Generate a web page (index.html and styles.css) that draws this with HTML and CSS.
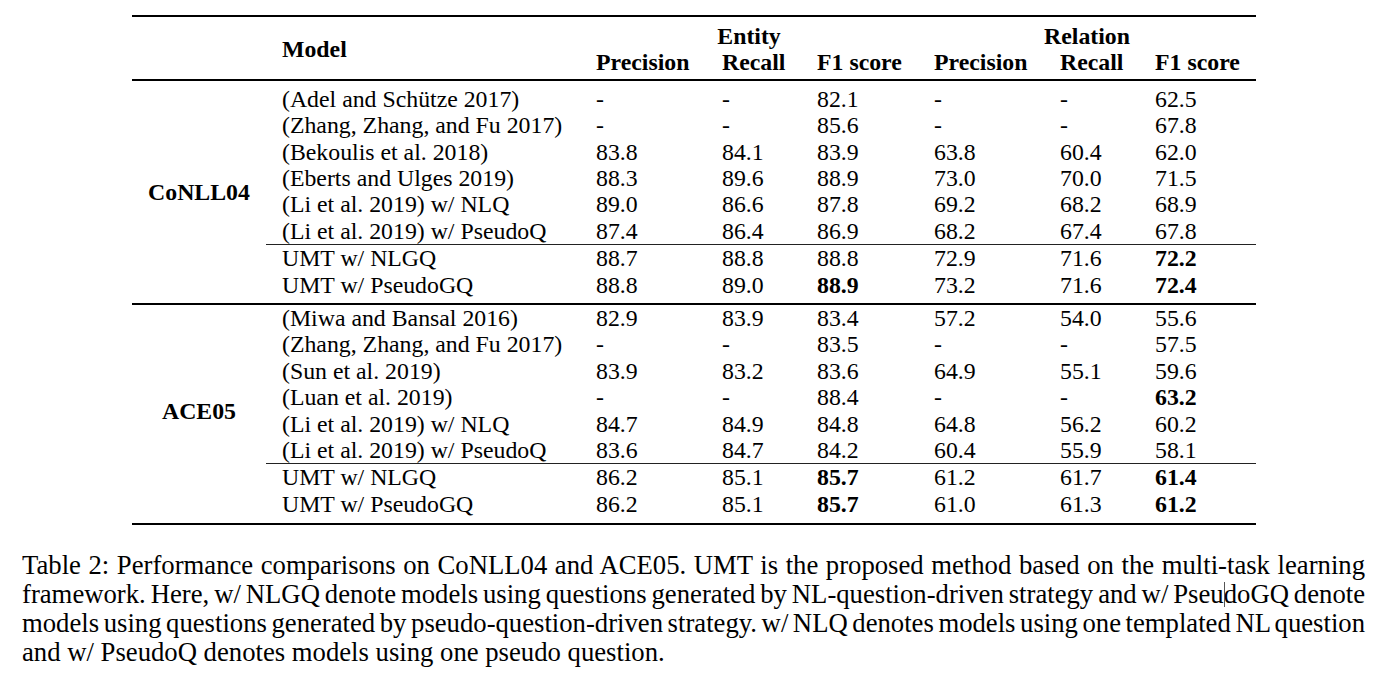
FILE: index.html
```html
<!DOCTYPE html>
<html lang="en">
<head>
<meta charset="utf-8">
<title>Table 2</title>
<link rel="stylesheet" href="styles.css">
</head>
<body>
<div class="page">
  <table class="results">
    <colgroup>
      <col class="c-data">
      <col class="c-model">
      <col class="c-prec">
      <col class="c-rec">
      <col class="c-f1">
      <col class="c-prec">
      <col class="c-rec">
      <col class="c-f1">
    </colgroup>
    <thead>
      <tr class="h1">
        <th class="span2" rowspan="2"></th>
        <th class="span2 model" rowspan="2">Model</th>
        <th class="group" colspan="3">Entity</th>
        <th class="group" colspan="3">Relation</th>
      </tr>
      <tr class="h2">
        <th>Precision</th><th>Recall</th><th>F1 score</th>
        <th>Precision</th><th>Recall</th><th>F1 score</th>
      </tr>
    </thead>
    <tbody>
      <tr class="first-a">
        <td class="dataset" rowspan="8">CoNLL04</td>
        <td>(Adel and Schütze 2017)</td><td>-</td><td>-</td><td>82.1</td><td>-</td><td>-</td><td>62.5</td>
      </tr>
      <tr><td>(Zhang, Zhang, and Fu 2017)</td><td>-</td><td>-</td><td>85.6</td><td>-</td><td>-</td><td>67.8</td></tr>
      <tr><td>(Bekoulis et al. 2018)</td><td>83.8</td><td>84.1</td><td>83.9</td><td>63.8</td><td>60.4</td><td>62.0</td></tr>
      <tr><td>(Eberts and Ulges 2019)</td><td>88.3</td><td>89.6</td><td>88.9</td><td>73.0</td><td>70.0</td><td>71.5</td></tr>
      <tr><td>(Li et al. 2019) w/ NLQ</td><td>89.0</td><td>86.6</td><td>87.8</td><td>69.2</td><td>68.2</td><td>68.9</td></tr>
      <tr><td>(Li et al. 2019) w/ PseudoQ</td><td>87.4</td><td>86.4</td><td>86.9</td><td>68.2</td><td>67.4</td><td>67.8</td></tr>
      <tr class="ours"><td>UMT w/ NLGQ</td><td>88.7</td><td>88.8</td><td>88.8</td><td>72.9</td><td>71.6</td><td><b>72.2</b></td></tr>
      <tr class="last-a"><td>UMT w/ PseudoGQ</td><td>88.8</td><td>89.0</td><td><b>88.9</b></td><td>73.2</td><td>71.6</td><td><b>72.4</b></td></tr>

      <tr class="first-b">
        <td class="dataset" rowspan="8">ACE05</td>
        <td>(Miwa and Bansal 2016)</td><td>82.9</td><td>83.9</td><td>83.4</td><td>57.2</td><td>54.0</td><td>55.6</td>
      </tr>
      <tr><td>(Zhang, Zhang, and Fu 2017)</td><td>-</td><td>-</td><td>83.5</td><td>-</td><td>-</td><td>57.5</td></tr>
      <tr><td>(Sun et al. 2019)</td><td>83.9</td><td>83.2</td><td>83.6</td><td>64.9</td><td>55.1</td><td>59.6</td></tr>
      <tr><td>(Luan et al. 2019)</td><td>-</td><td>-</td><td>88.4</td><td>-</td><td>-</td><td><b>63.2</b></td></tr>
      <tr><td>(Li et al. 2019) w/ NLQ</td><td>84.7</td><td>84.9</td><td>84.8</td><td>64.8</td><td>56.2</td><td>60.2</td></tr>
      <tr><td>(Li et al. 2019) w/ PseudoQ</td><td>83.6</td><td>84.7</td><td>84.2</td><td>60.4</td><td>55.9</td><td>58.1</td></tr>
      <tr class="ours"><td>UMT w/ NLGQ</td><td>86.2</td><td>85.1</td><td><b>85.7</b></td><td>61.2</td><td>61.7</td><td><b>61.4</b></td></tr>
      <tr class="last-b"><td>UMT w/ PseudoGQ</td><td>86.2</td><td>85.1</td><td><b>85.7</b></td><td>61.0</td><td>61.3</td><td><b>61.2</b></td></tr>
    </tbody>
  </table>

  <div class="caption">
    <div class="line">Table 2: Performance comparisons on CoNLL04 and ACE05. UMT is the proposed method based on the multi-task learning</div>
    <div class="line tight">framework. Here, w/ NLGQ denote models using questions generated by NL-question-driven strategy and w/ Pseu<span class="caret"></span>doGQ denote</div>
    <div class="line tight">models using questions generated by pseudo-question-driven strategy. w/ NLQ denotes models using one templated NL question</div>
    <div class="line last">and w/ PseudoQ denotes models using one pseudo question.</div>
  </div>
</div>
</body>
</html>
```

FILE: styles.css
```css
html, body {
  margin: 0;
  padding: 0;
  background: #ffffff;
  color: #000000;
}

.page {
  padding-top: 15px;
  font-family: "Liberation Serif", "Times New Roman", serif;
}

/* ---------- table ---------- */
.results {
  margin-left: 132px;
  width: 1124px;
  table-layout: fixed;
  border-collapse: separate;
  border-spacing: 0;
  border-top: 2px solid #000;
  border-bottom: 2px solid #000;
  font-size: 23.8px;
  line-height: 26.4px;
}

.c-data { width: 134px; }
.c-model { width: 314px; }
.c-prec { width: 126px; }
.c-rec { width: 95px; }
.c-f1 { width: 117px; }

.results th,
.results td {
  padding: 0 16px;
  text-align: left;
  vertical-align: middle;
  white-space: nowrap;
  height: 26.4px;
  box-sizing: content-box;
}

.results th {
  font-weight: bold;
}

.results b {
  font-weight: bold;
}

/* header rows */
.results .h1 th {
  padding-top: 5.6px;
}

.results .group {
  text-align: center;
}

.results th.span2 {
  padding-top: 5.6px;
  padding-bottom: 3.6px;
  border-bottom: 2px solid #000;
}

.results .h2 th {
  padding-bottom: 3.6px;
  border-bottom: 2px solid #000;
}

/* body rows */
.results .dataset {
  text-align: center;
  font-weight: bold;
  padding-left: 8px;
  padding-right: 8px;
}

.results .first-a td {
  padding-top: 4.8px;
}

.results .first-a td.dataset {
  padding-top: 4.8px;
  padding-bottom: 5px;
}

.results .ours td {
  border-top: 1px solid #222;
}

.results .last-a td {
  padding-bottom: 5px;
}

.results .first-b td {
  border-top: 2px solid #000;
}

.results .first-b td.dataset {
  padding-bottom: 6px;
}

.results .last-b td {
  padding-bottom: 6px;
}

/* ---------- caption ---------- */
.caption {
  margin: 25.5px 0 0 22px;
  width: 1343px;
  font-size: 26.7px;
  line-height: 29px;
}

.caption .line {
  text-align: justify;
  text-align-last: justify;
}

.caption .line.tight {
  word-spacing: -3px;
}

.caption .line.last {
  text-align: left;
  text-align-last: left;
}

.caret {
  position: relative;
  display: inline-block;
  width: 0;
  height: 0;
}

.caret::after {
  content: "";
  position: absolute;
  left: 0;
  bottom: -4px;
  width: 1px;
  height: 25px;
  background: #555;
}
```
